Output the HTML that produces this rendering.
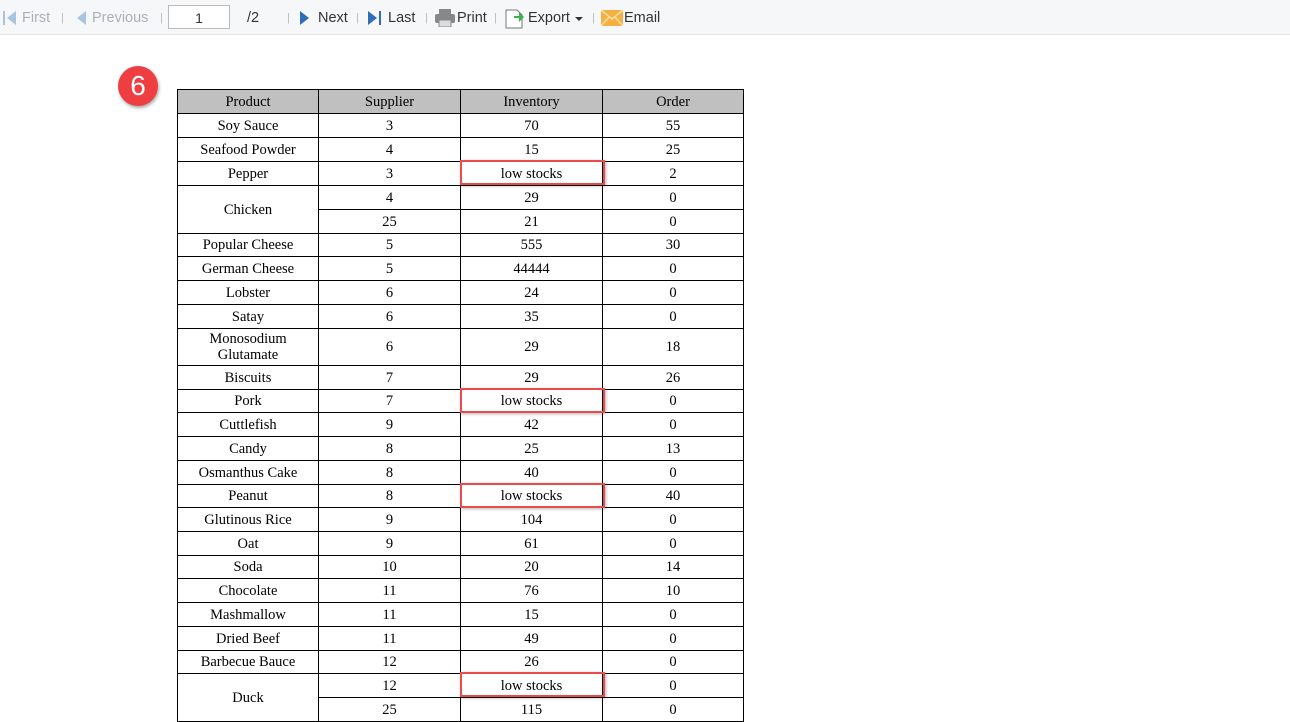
<!DOCTYPE html>
<html><head><meta charset="utf-8"><style>
body{margin:0;width:1290px;height:721px;overflow:hidden;background:#fff;position:relative;font-family:"Liberation Sans",sans-serif}
.tb{position:absolute;left:0;top:0;width:1290px;height:34px;background:#f6f7f9;border-bottom:1px solid #e3e5e8;font-size:14.5px;color:#333}
.tb span{position:absolute;top:10px;line-height:17px}
.dis{color:#aab0b8}
.sep{color:#bbb;font-size:11px}
.pg{position:absolute;left:168px;top:5px;width:60px;height:22px;border:1px solid #bbb;background:#fff;text-align:center;line-height:24px;font-size:14px}
.badge{position:absolute;left:118px;top:66px;width:40px;height:40px;border-radius:50%;background:#ee3e42;color:#fff;font-size:28px;text-align:center;line-height:40px;box-shadow:1px 2px 3px rgba(0,0,0,.35)}
table{position:absolute;left:177px;top:89px;border-collapse:collapse;table-layout:fixed;font-family:"Liberation Serif",serif;font-size:14.5px;color:#000}
td{border:1px solid #000;text-align:center;padding:0;line-height:16px}
tr.h td{background:#c0c0c0}
.rb{position:absolute;left:460px;width:141px;height:21px;border:2px solid #ec4b4e;box-shadow:1px 1px 3px rgba(0,0,0,.3)}
</style></head><body>
<div class="tb">
<svg style="position:absolute;left:3px;top:11px" width="14" height="14"><rect x="0" y="0" width="2" height="14" fill="#a9c4e0"/><path d="M13 0 L4 7 L13 14Z" fill="#a9c4e0"/></svg>
<span class="dis" style="left:22px">First</span><span class="sep" style="left:61px">|</span>
<svg style="position:absolute;left:75px;top:11px" width="12" height="14"><path d="M11 0 L2 7 L11 14Z" fill="#a9c4e0"/></svg>
<span class="dis" style="left:92px">Previous</span><span class="sep" style="left:160px">|</span>
<div class="pg">1</div>
<span style="left:247px">/2</span><span class="sep" style="left:287px">|</span>
<svg style="position:absolute;left:299px;top:11px" width="12" height="14"><path d="M1 0 L10 7 L1 14Z" fill="#2f6db5"/></svg>
<span style="left:318px">Next</span><span class="sep" style="left:356px">|</span>
<svg style="position:absolute;left:368px;top:11px" width="14" height="14"><path d="M0 0 L9 7 L0 14Z" fill="#2f6db5"/><rect x="11" y="0" width="2" height="14" fill="#2f6db5"/></svg>
<span style="left:388px">Last</span><span class="sep" style="left:425px">|</span>
<svg style="position:absolute;left:434px;top:9px" width="22" height="18"><rect x="5" y="0" width="12" height="5" fill="#888"/><rect x="1" y="5" width="20" height="9" rx="2" fill="#888"/><rect x="5" y="11" width="12" height="7" fill="#ddd" stroke="#888"/></svg>
<span style="left:457px">Print</span><span class="sep" style="left:494px">|</span>
<svg style="position:absolute;left:505px;top:7px" width="20" height="22"><path d="M1 3 H12 L17 8 V21 H1Z" fill="#fff" stroke="#777"/><path d="M9 9 H14 V5 L19 10 L14 15 V11 H9Z" fill="#3bb14a"/></svg>
<span style="left:528px">Export</span>
<svg style="position:absolute;left:575px;top:17px" width="8" height="5"><path d="M0 0 H8 L4 4Z" fill="#333"/></svg>
<span class="sep" style="left:592px">|</span>
<svg style="position:absolute;left:601px;top:10px" width="22" height="16"><rect width="22" height="16" fill="#f5b041"/><path d="M0 0 L11 9 L22 0 M0 16 L8 7 M22 16 L14 7" stroke="#fbe0a8" stroke-width="1.5" fill="none"/></svg>
<span style="left:624px">Email</span>
</div>
<div class="badge">6</div>
<table>
<colgroup><col style="width:141px"><col style="width:142px"><col style="width:142px"><col style="width:141px"></colgroup>
<tr class="h" style="height:24px"><td>Product</td><td>Supplier</td><td>Inventory</td><td>Order</td></tr>
<tr style="height:24px"><td>Soy Sauce</td><td>3</td><td>70</td><td>55</td></tr>
<tr style="height:24px"><td>Seafood Powder</td><td>4</td><td>15</td><td>25</td></tr>
<tr style="height:24px"><td>Pepper</td><td>3</td><td>low stocks</td><td>2</td></tr>
<tr style="height:24px"><td rowspan="2">Chicken</td><td>4</td><td>29</td><td>0</td></tr>
<tr style="height:24px"><td>25</td><td>21</td><td>0</td></tr>
<tr style="height:23px"><td>Popular Cheese</td><td>5</td><td>555</td><td>30</td></tr>
<tr style="height:24px"><td>German Cheese</td><td>5</td><td>44444</td><td>0</td></tr>
<tr style="height:24px"><td>Lobster</td><td>6</td><td>24</td><td>0</td></tr>
<tr style="height:24px"><td>Satay</td><td>6</td><td>35</td><td>0</td></tr>
<tr style="height:37px"><td>Monosodium<br>Glutamate</td><td>6</td><td>29</td><td>18</td></tr>
<tr style="height:24px"><td>Biscuits</td><td>7</td><td>29</td><td>26</td></tr>
<tr style="height:23px"><td>Pork</td><td>7</td><td>low stocks</td><td>0</td></tr>
<tr style="height:24px"><td>Cuttlefish</td><td>9</td><td>42</td><td>0</td></tr>
<tr style="height:24px"><td>Candy</td><td>8</td><td>25</td><td>13</td></tr>
<tr style="height:24px"><td>Osmanthus Cake</td><td>8</td><td>40</td><td>0</td></tr>
<tr style="height:23px"><td>Peanut</td><td>8</td><td>low stocks</td><td>40</td></tr>
<tr style="height:24px"><td>Glutinous Rice</td><td>9</td><td>104</td><td>0</td></tr>
<tr style="height:24px"><td>Oat</td><td>9</td><td>61</td><td>0</td></tr>
<tr style="height:23px"><td>Soda</td><td>10</td><td>20</td><td>14</td></tr>
<tr style="height:24px"><td>Chocolate</td><td>11</td><td>76</td><td>10</td></tr>
<tr style="height:24px"><td>Mashmallow</td><td>11</td><td>15</td><td>0</td></tr>
<tr style="height:24px"><td>Dried Beef</td><td>11</td><td>49</td><td>0</td></tr>
<tr style="height:23px"><td>Barbecue Bauce</td><td>12</td><td>26</td><td>0</td></tr>
<tr style="height:24px"><td rowspan="2">Duck</td><td>12</td><td>low stocks</td><td>0</td></tr>
<tr style="height:24px"><td>25</td><td>115</td><td>0</td></tr>
</table>
<div class="rb" style="top:160px"></div>
<div class="rb" style="top:388px"></div>
<div class="rb" style="top:483px"></div>
<div class="rb" style="top:672px"></div>
</body></html>
